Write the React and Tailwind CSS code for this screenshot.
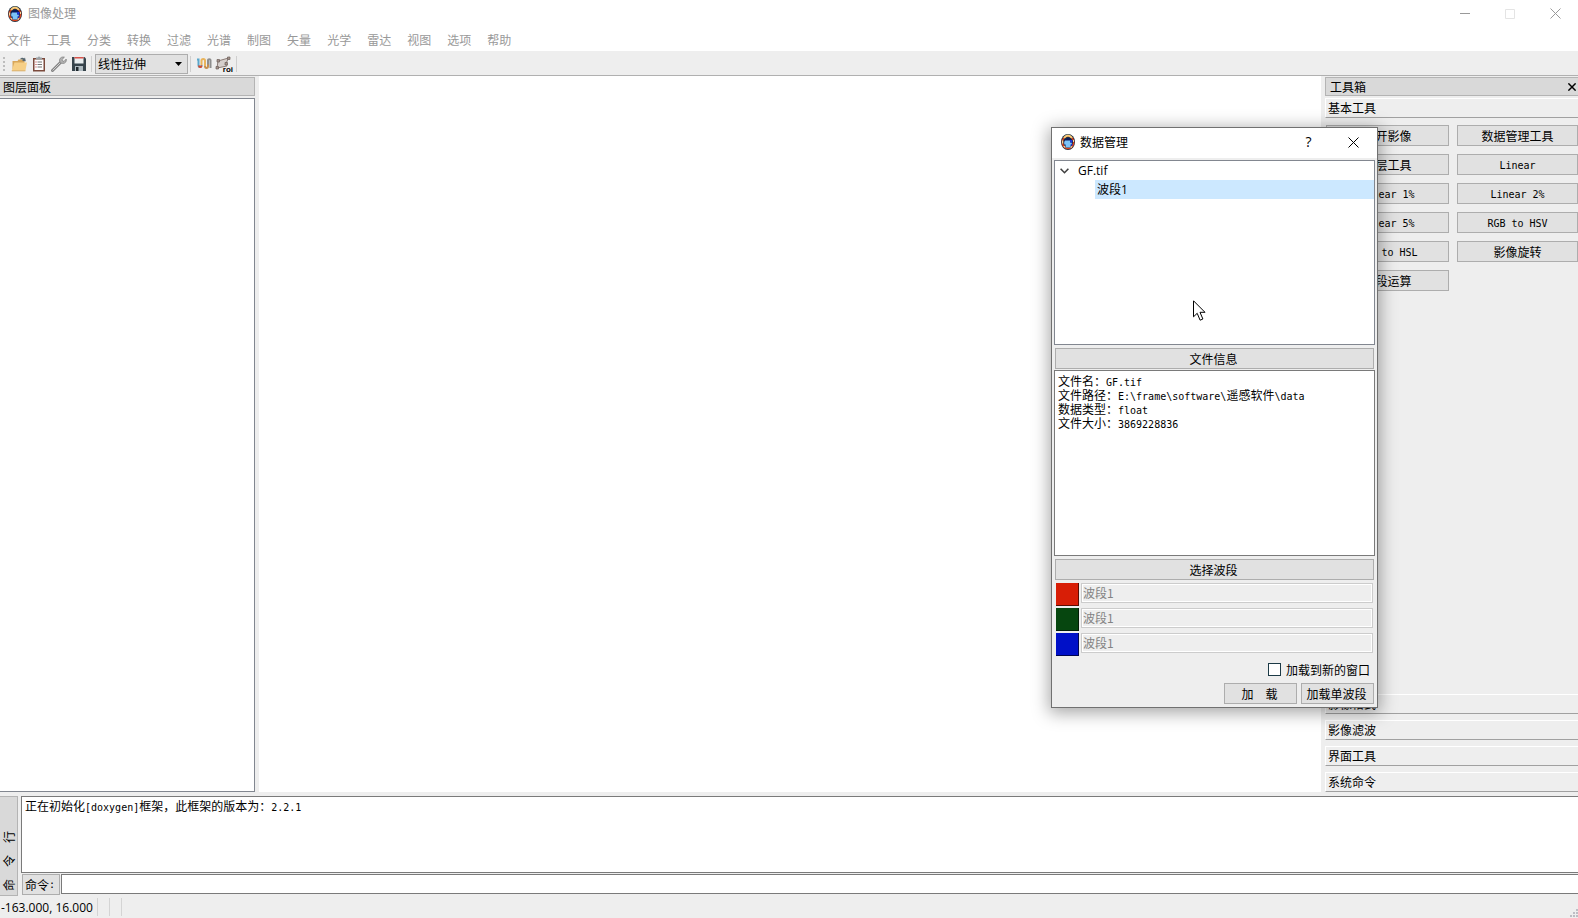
import { useState } from 'react'

const menus = ['文件', '工具', '分类', '转换', '过滤', '光谱', '制图', '矢量', '光学', '雷达', '视图', '选项', '帮助']

const tools = [
  { label: '打开影像' },
  { label: '数据管理工具' },
  { label: '图层工具' },
  { label: 'Linear', latin: true },
  { label: 'Linear 1%', latin: true },
  { label: 'Linear 2%', latin: true },
  { label: 'Linear 5%', latin: true },
  { label: 'RGB to HSV', latin: true },
  { label: 'RGB to HSL', latin: true },
  { label: '影像旋转' },
  { label: '波段运算' },
]

const toolGroups = ['影像格式', '影像滤波', '界面工具', '系统命令']

const bands = [
  { id: 'red', name: '红', color: 'bg-[#d81e06] border-[#5a0c02]' },
  { id: 'green', name: '绿', color: 'bg-[#06460f] border-[#021c05]' },
  { id: 'blue', name: '蓝', color: 'bg-[#0010c8] border-[#000550]' },
]

function Latin({ children }) {
  return <span className="font-['DejaVu_Sans_Mono',monospace] text-[10px] leading-none">{children}</span>
}

function AppLogo() {
  return (
    <svg width="14" height="16" viewBox="0 0 14 16" className="shrink-0">
      <ellipse cx="7" cy="8" rx="7" ry="8" fill="#1c3040" />
      <ellipse cx="7" cy="8.3" rx="5.600" ry="6.300" fill="none" stroke="#d8401c" strokeWidth="1.500" />
      <path d="M3 3.800Q7-.6 11 3.800" fill="none" stroke="#f6cf7c" strokeWidth="2" />
      <path d="M1.600 6.500v3M12.400 6v2M2.800 12l1.200 1.400M11 12.400l-1.200 1.200" stroke="#f3d9a0" strokeWidth="1.200" />
      <path d="M3 6l3-2h3l3 3-1 3-2 3H5l-2-3z" fill="#0b1a5a" />
      <path d="M4 6.400h5.200v2h1.600v2H9.600v3.200H4.600v-3.200H3.200V8z" fill="#7cc4f8" />
      <path d="M9.200 6h2v2.600h-2zM10 10h1.400v1.600H10z" fill="#1b36e0" />
    </svg>
  )
}

function CloseIcon({ size = 11, width = 1 }) {
  return (
    <svg width={size} height={size} viewBox="0 0 11 11" fill="none" stroke="currentColor" strokeWidth={width}>
      <path d="M.5.5l10 10M10.5.5l-10 10" />
    </svg>
  )
}

function TitleBar() {
  return (
    <header className="flex h-7 shrink-0 items-center bg-white pb-px pl-2 text-[#999]">
      <AppLogo />
      <h1 className="ml-1.5 flex-1 pb-px">图像处理</h1>
      <button aria-label="最小化" className="flex h-6 w-[45px] items-center justify-center">
        <svg width="10" height="11" stroke="#999">
          <path d="M0 5.5h10" />
        </svg>
      </button>
      <button aria-label="最大化" className="flex h-6 w-[45px] items-center justify-center">
        <svg width="10" height="10" fill="none" stroke="#e4e4e4">
          <path d="M.5.5h9v9h-9z" />
        </svg>
      </button>
      <button aria-label="关闭" className="flex h-6 w-[46px] items-center justify-center pr-[5px] pl-[5px]">
        <CloseIcon />
      </button>
    </header>
  )
}

function MenuBar() {
  return (
    <nav className="flex h-6 shrink-0 items-center gap-4 border-b border-[#eee] bg-white pl-[7px] text-[#999]">
      {menus.map((m) => (
        <button key={m}>{m}</button>
      ))}
    </nav>
  )
}

function Separator() {
  return <span className="h-4 w-px shrink-0 bg-[#cfcfcf]" />
}

function ToolBar() {
  return (
    <div className="flex h-6 shrink-0 items-center border-b border-[#b0b0b0] bg-[#eee] pl-[3px]">
      <svg width="2" height="16" fill="#bdbdbd" className="shrink-0">
        <path d="M0 1h2v2H0zM0 5h2v2H0zM0 9h2v2H0zM0 13h2v2H0z" />
      </svg>
      <button aria-label="打开" className="ml-1.5">
        <svg width="16" height="16" viewBox="0 0 16 16">
          <path d="M1.5 5h5l1-1.5h6V13h-12z" fill="#d8a659" />
          <path d="M9 3.2c1-1.8 3-2 4.2-.8l.8-.9.8 3.8-3.7-.4.9-.9c-.8-.9-2-.8-3 -.8z" fill="#56666f" />
          <path d="M3.4 6.5H16l-1.6 8.3H.8z" fill="#f6cf86" />
          <path d="M.8 14.8h13.6" stroke="#d9ae65" />
        </svg>
      </button>
      <button aria-label="数据管理" className="ml-1">
        <svg width="16" height="16" viewBox="0 0 16 16">
          <path d="M2 2h12v13.5H2z" fill="#7b4a3c" />
          <path d="M3.5 3.5h9V14h-9z" fill="#fdfdfd" />
          <path d="M5 1.5h1.5L8 .2l1.500 1.300H11v2H5z" fill="#9ba3a8" />
          <path d="M6.500 6H11M6.500 8.500H11M6.500 11H11" stroke="#777" />
          <path d="M4.500 6h1M4.500 8.500h1M4.500 11h1" stroke="#b33" />
        </svg>
      </button>
      <button aria-label="设置" className="ml-1">
        <svg width="16" height="16" viewBox="0 0 16 16" fill="none">
          <path d="M1.500 14.500l8-8" stroke="#858585" strokeWidth="3" strokeLinecap="round" />
          <path d="M1.800 14.200l8-8" stroke="#d0d0d0" strokeLinecap="round" />
          <path d="M13.400 1.200L11 3.500l.4 1.500 1.600.4 2.200-2.300c.6 2.300-1 4.500-3.400 4.300-2 0-3.600-1.700-3.200-3.700C9 1.600 11.200.5 13.400 1.200z" fill="#b4b4b4" stroke="#808080" strokeWidth=".8" />
        </svg>
      </button>
      <button aria-label="保存" className="ml-1">
        <svg width="16" height="16" viewBox="0 0 16 16">
          <path d="M1 1h12.500L15 2.500V15H1z" fill="#36434b" />
          <path d="M3.500 1h9v6.500h-9z" fill="#e9eef0" />
          <path d="M3.500 1h9v1.500h-9z" fill="#d9534a" />
          <path d="M4 10h8v5H4z" fill="#aebac0" />
          <path d="M5 11h2.500v4H5z" fill="#1d262b" />
        </svg>
      </button>
      <span className="mr-[3px] ml-1 flex">
        <Separator />
      </span>
      <label className="relative flex">
        <select
          aria-label="拉伸方式"
          className="h-5 w-[93px] appearance-none border border-[#adadad] bg-[#e1e1e1] pl-[2px] text-black outline-none"
        >
          <option>线性拉伸</option>
        </select>
        <svg width="7" height="4" className="pointer-events-none absolute top-2 right-[6px]">
          <path d="M0 0h7L3.500 4z" />
        </svg>
      </label>
      <span className="mr-[5px] ml-[2px] flex">
        <Separator />
      </span>
      <button aria-label="光谱曲线">
        <svg width="16" height="16" viewBox="0 0 16 16" fill="none" strokeWidth="2">
          <path d="M1 3.500h1.500V9c0 2.500 3 2.500 3 0" stroke="#5aa7cc" />
          <path d="M3 9.500c0 2 2.500 2 2.500 0" stroke="#d9482c" />
          <path d="M5.500 9V4.500c0-2 3.500-2 3.500 0V10" stroke="#e9b45c" />
          <path d="M9 10c0 2.500 3 2.500 3 0V8" stroke="#c58f50" />
          <path d="M12 8.500V4c0-1 2.500-1 2.500 0v8" stroke="#8e8e8e" />
        </svg>
      </button>
      <button aria-label="ROI" className="relative ml-[3px]">
        <svg width="17" height="16" viewBox="0 0 17 16" fill="none">
          <path d="M3 5L13.500 2 11 7.500 12 10 2 12z" fill="#d6cfcc" stroke="#8b7c77" />
          <path d="M2 3.500h2.500V6H2zM12.500 1H15v2.500h-2.500zM1 10.500h2.500V13H1zM10 6.500h2.500V9H10z" fill="#a5928c" stroke="#6c5f5a" strokeWidth=".7" />
        </svg>
        <span className="absolute -right-px -bottom-[3px] font-['Liberation_Sans',sans-serif] text-[8px] leading-[10px] font-bold">roi</span>
      </button>
      <span className="ml-1 flex">
        <Separator />
      </span>
    </div>
  )
}

function GroupTab({ children }) {
  return (
    <button className="flex h-5 w-full shrink-0 items-center border-t border-b border-l border-t-white border-b-[#a0a0a0] border-l-white pl-[2px] text-left">
      {children}
    </button>
  )
}

function PushButton({ className = '', children }) {
  return (
    <button className={`flex h-[21px] items-center justify-center border border-[#adadad] bg-[#e1e1e1] whitespace-pre ${className}`}>
      {children}
    </button>
  )
}

function ToolBox() {
  return (
    <aside className="flex w-[253px] shrink-0 flex-col overflow-hidden pt-px">
      <div className="flex h-[19px] shrink-0 items-center border border-r-0 border-[#b4b4b4] bg-[#d9d9d9] pl-1">
        <h2 className="flex-1">工具箱</h2>
        <button aria-label="关闭工具箱" className="mr-[2px]">
          <CloseIcon size={8} width={2} />
        </button>
      </div>
      <div className="mt-0.5 flex min-h-0 flex-1 flex-col">
        <GroupTab>基本工具</GroupTab>
        <div className="mt-[7px] grid flex-1 grid-cols-[123px_121px] content-start gap-2 pl-px">
          {tools.map((t) => (
            <PushButton key={t.label} className={t.latin ? 'pt-[2px]' : ''}>
              {t.latin ? <Latin>{t.label}</Latin> : t.label}
            </PushButton>
          ))}
        </div>
        <div className="flex flex-col gap-1.5">
          {toolGroups.map((g) => (
            <GroupTab key={g}>{g}</GroupTab>
          ))}
        </div>
      </div>
    </aside>
  )
}

function CommandPanel() {
  return (
    <section className="flex h-[104px] shrink-0 pt-1">
      <div className="flex w-[18px] shrink-0 justify-center border border-l-0 border-[#b4b4b4] bg-[#d9d9d9]">
        <h2 className="flex rotate-180 gap-3 pt-1 leading-4 [text-orientation:sideways] [writing-mode:vertical-rl]">
          <span>命</span>
          <span>令</span>
          <span>行</span>
        </h2>
      </div>
      <div className="ml-[3px] flex min-w-0 flex-1 flex-col">
        <div className="h-[77px] border border-r-0 border-[#7a7a7a] bg-white pt-px pl-[3px]">
          正在初始化<Latin>[doxygen]</Latin>框架，此框架的版本为：<Latin>2.2.1</Latin>
        </div>
        <div className="mt-px flex">
          <label htmlFor="command" className="ml-px flex h-[21px] w-[38px] items-center border border-[#adadad] bg-[#e1e1e1] pl-[2px]">
            命令<Latin>:</Latin>
          </label>
          <input id="command" className="ml-px h-5 min-w-0 flex-1 border border-r-0 border-[#7a7a7a] bg-white px-1 outline-none" />
        </div>
      </div>
    </section>
  )
}

function StatusBar() {
  return (
    <footer className="flex h-[22px] shrink-0 items-center">
      <span className="w-24 pt-[2px] pl-px font-['Open_Sans','Noto_Sans',sans-serif] whitespace-nowrap">-163.000, 16.000</span>
      <span className="flex gap-[11px] pl-px">
        <span className="h-[18px] w-px bg-[#d4d4d4]" />
        <span className="h-[18px] w-px bg-[#d4d4d4]" />
        <span className="h-[18px] w-px bg-[#d4d4d4]" />
      </span>
      <svg width="8" height="8" fill="#bdbdc4" className="mt-3 ml-auto">
        <path d="M6 0h2v2H6zM3 3h2v2H3zM6 3h2v2H6zM0 6h2v2H0zM3 6h2v2H3zM6 6h2v2H6z" />
      </svg>
    </footer>
  )
}

function DataDialog() {
  const [newWindow, setNewWindow] = useState(false)

  return (
    <div
      role="dialog"
      aria-label="数据管理"
      className="absolute top-[127px] right-[200px] w-[327px] border border-[#707070] bg-[#eee] shadow-[0_3px_16px_2px_rgba(0,0,0,0.35)]"
    >
      <div className="flex h-[30px] items-center bg-white pr-px pb-[2px] pl-[9px]">
        <AppLogo />
        <h2 className="ml-[5px] flex-1">数据管理</h2>
        <button aria-label="帮助" className="w-[45px] font-['Open_Sans',sans-serif] text-sm">
          ?
        </button>
        <button aria-label="关闭" className="flex w-[45px] items-center justify-center">
          <CloseIcon />
        </button>
      </div>

      <div className="flex flex-col px-[2px] pt-[2px] pb-[3px]">
        <div className="h-[185px] border border-[#828790] bg-white font-['Open_Sans','Noto_Sans_CJK_SC',sans-serif]">
          <div className="flex h-[19px] items-center">
            <svg width="9" height="6" fill="none" stroke="#404040" strokeWidth="1.600" className="ml-[5px]">
              <path d="M.6.8l3.900 3.900L8.400.8" />
            </svg>
            <span className="ml-[9px]">GF.tif</span>
          </div>
          <div className="ml-10 flex h-[19px] items-center bg-[#cce8ff] pl-[2px]">波段1</div>
        </div>

        <PushButton className="mx-px mt-[3px] pr-[2px]">文件信息</PushButton>
        <div className="mt-px h-[186px] border border-[#7a7a7a] bg-white pt-[3px] pl-[3px] leading-[14px]">
          <p>文件名：<Latin>GF.tif</Latin></p>
          <p>文件路径：<Latin>E:\frame\software\</Latin>遥感软件<Latin>\data</Latin></p>
          <p>数据类型：<Latin>float</Latin></p>
          <p>文件大小：<Latin>3869228836</Latin></p>
        </div>

        <PushButton className="mx-px mt-[3px] pr-[2px]">选择波段</PushButton>
        <div className="mt-[3px] flex flex-col gap-[2px] px-[2px]">
          {bands.map((b) => (
            <div key={b.id} className="flex h-[23px] items-start">
              <span className={`size-[23px] border-r border-b ${b.color}`} />
              <input
                aria-label={`${b.name}色波段`}
                value="波段1"
                disabled
                className="ml-[2px] h-5 min-w-0 flex-1 border border-[#ccc] bg-[#eee] pb-[2px] pl-px text-[#838383] inset-ring inset-ring-white"
              />
            </div>
          ))}
        </div>

        <label className="mt-[5px] mr-[5px] flex h-[17px] items-center gap-[5px] self-end">
          <input
            type="checkbox"
            checked={newWindow}
            onChange={(e) => setNewWindow(e.target.checked)}
            className="size-[13px] appearance-none border border-[#1c3a46] bg-white checked:bg-[#1c3a46]"
          />
          加载到新的窗口
        </label>

        <div className="mt-[5px] mr-px flex justify-end gap-1">
          <PushButton className="w-[73px] pr-[2px]">加　载</PushButton>
          <PushButton className="w-[73px] pr-[2px]">加载单波段</PushButton>
        </div>
      </div>

      <svg width="13" height="22" viewBox="0 0 13 22" className="pointer-events-none absolute top-[172px] left-[141px]">
        <path d="M.5.8v16l3.700-3.500 2.900 6.900 2.800-1.200-2.900-6.700h5z" fill="#fff" stroke="#000" />
      </svg>
    </div>
  )
}

export default function App() {
  return (
    <div className="relative flex h-screen flex-col overflow-hidden bg-[#eee] font-['Noto_Sans_CJK_SC',sans-serif] text-[12px] leading-4 text-black">
      <TitleBar />
      <MenuBar />
      <ToolBar />

      <main className="flex min-h-0 flex-1">
        <aside className="flex w-[255px] shrink-0 flex-col pt-px">
          <h2 className="flex h-[19px] items-center border border-l-0 border-[#b4b4b4] bg-[#d9d9d9] pl-[3px]">图层面板</h2>
          <div className="mt-0.5 flex-1 border border-l-0 border-[#828790] bg-white" />
        </aside>
        <div className="mx-1 flex-1 bg-white" />
        <ToolBox />
      </main>

      <CommandPanel />
      <StatusBar />
      <DataDialog />
    </div>
  )
}
